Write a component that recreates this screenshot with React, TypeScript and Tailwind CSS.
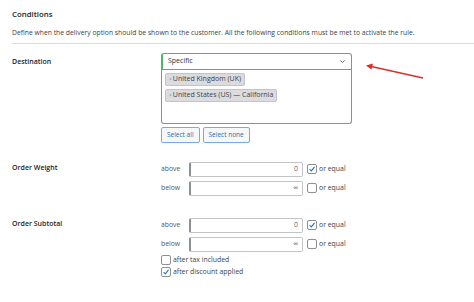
import React from 'react';

const font = { fontFamily: '"Open Sans", "Noto Sans", sans-serif' };

const Checkbox: React.FC<{ checked?: boolean }> = ({ checked }) => (
  <span className="flex h-[10px] w-[10px] shrink-0 items-center justify-center rounded-[2px] border border-[#8c8f94] bg-white">
    {checked && (
      <svg viewBox="0 0 10 10" className="h-[8px] w-[8px]">
        <path d="M2 5.2 L4.2 7.4 L8.2 2.4" fill="none" stroke="#2271b1" strokeWidth="1.3" />
      </svg>
    )}
  </span>
);

const RangeRow: React.FC<{ label: string; value: string; checked?: boolean }> = ({ label, value, checked }) => (
  <div className="flex h-[15px] items-center">
    <span className="w-[28px] text-[6.8px] text-[#50575e]">{label}</span>
    <div className="flex h-[15px] w-[114px] items-center justify-end rounded-[2px] border border-[#c3c4c7] border-l-[2px] border-l-[#8c8f94] bg-white pr-[4px] text-[6.8px] text-[#646970]">
      {value}
    </div>
    <span className="ml-[4px] flex items-center gap-[2px] text-[6.9px] text-[#3c434a]">
      <Checkbox checked={checked} />
      or equal
    </span>
  </div>
);

const Tag: React.FC<{ text: string }> = ({ text }) => (
  <span className="flex h-[13px] items-center self-start rounded-[2px] border border-[#c3c4c7] bg-[#dcdcde] px-[3px] text-[7px] text-[#3c434a]">
    <span className="mr-[1px] text-[5px] text-[#8c8f94]">×</span>
    {text}
  </span>
);

export default function App() {
  return (
    <div className="relative h-[302px] w-[474px] overflow-hidden bg-white" style={font}>
      <div className="pl-[12px] pt-[9px]">
        <h2 className="text-[7.8px] font-semibold text-[#1d2327]">Conditions</h2>
        <p className="mt-[7px] text-[6.8px] text-[#3c434a]">
          Define when the delivery option should be shown to the customer. All the following conditions must be met to activate the rule.
        </p>
        <div className="mt-[5px] border-t border-[#dcdcde]" />

        <div className="mt-[9px] flex">
          <div className="w-[149px] pt-[4px] text-[7px] font-semibold text-[#1d2327]">Destination</div>
          <div className="w-[191px]">
            <div className="flex h-[17px] items-center justify-between rounded-t-[3px] border border-[#8c8f94] border-l-[2px] border-l-[#4ab866] bg-white pl-[5px] pr-[5px] text-[7px] text-[#2c3338]">
              Specific
              <svg viewBox="0 0 10 10" className="h-[7px] w-[7px]">
                <path d="M2 3.5 L5 6.5 L8 3.5" fill="none" stroke="#50575e" strokeWidth="1.3" />
              </svg>
            </div>
            <div className="flex h-[54px] flex-col gap-[3px] rounded-b-[3px] border border-t-0 border-[#8c8f94] bg-white px-[3px] pt-[3px]">
              <Tag text="United Kingdom (UK)" />
              <Tag text="United States (US) — California" />
            </div>
            <div className="mt-[3px] flex gap-[3px]">
              <button className="h-[16px] rounded-[2px] border border-[#72aee6] bg-[#f6f7f7] px-[5px] text-[6.5px] text-[#2271b1]">Select all</button>
              <button className="h-[16px] rounded-[2px] border border-[#72aee6] bg-[#f6f7f7] px-[5px] text-[6.5px] text-[#2271b1]">Select none</button>
            </div>
          </div>
        </div>

        <div className="mt-[19px] flex">
          <div className="w-[149px] pt-[1px] text-[7px] font-semibold text-[#1d2327]">Order Weight</div>
          <div className="flex flex-col gap-[4px]">
            <RangeRow label="above" value="0" checked />
            <RangeRow label="below" value="∞" />
          </div>
        </div>

        <div className="mt-[22px] flex">
          <div className="w-[149px] pt-[1px] text-[7px] font-semibold text-[#1d2327]">Order Subtotal</div>
          <div className="flex flex-col gap-[4px]">
            <RangeRow label="above" value="0" checked />
            <RangeRow label="below" value="∞" />
            <div className="-mt-[1px] flex flex-col gap-[2px]">
              <span className="flex items-center gap-[2px] text-[6.9px] text-[#3c434a]">
                <Checkbox />
                after tax included
              </span>
              <span className="flex items-center gap-[2px] text-[6.9px] text-[#3c434a]">
                <Checkbox checked />
                after discount applied
              </span>
            </div>
          </div>
        </div>
      </div>

      <svg className="absolute left-[360px] top-[60px] h-[24px] w-[70px]" viewBox="0 0 70 24">
        <path d="M63 18 L9 6" stroke="#e02b27" strokeWidth="1.4" fill="none" />
        <path d="M6 5.5 L13 3.5 L11.5 9.5 Z" fill="#e02b27" />
      </svg>
    </div>
  );
}
